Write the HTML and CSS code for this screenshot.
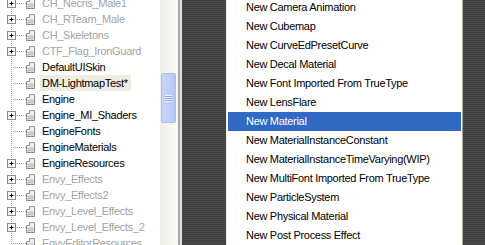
FILE: index.html
```html
<!DOCTYPE html>
<html>
<head>
<meta charset="utf-8">
<link rel="stylesheet" href="styles.css">
</head>
<body>
<div class="app">
  <div class="tree">
    <ul class="tree-list">
      <li class="row missing"><svg class="gutter" width="26" height="16"><line class="dot" x1="11.5" y1="0" x2="11.5" y2="16"/><line class="dot" x1="17" y1="8.5" x2="26" y2="8.5"/><rect class="pbox" x="7.5" y="4.5" width="8" height="8"/><path class="plus" d="M9.5 8.5h4M11.5 6.5v4"/></svg><svg class="pkg" width="9" height="11"><path d="M0.5 3.5h3v-3h5v10h-8z"/><path class="in" d="M2 6h2v3h-2zM5 6h2v3h-2z"/></svg><span class="label">CH_Necris_Male1</span></li>
      <li class="row missing"><svg class="gutter" width="26" height="16"><line class="dot" x1="11.5" y1="0" x2="11.5" y2="16"/><line class="dot" x1="17" y1="8.5" x2="26" y2="8.5"/><rect class="pbox" x="7.5" y="4.5" width="8" height="8"/><path class="plus" d="M9.5 8.5h4M11.5 6.5v4"/></svg><svg class="pkg" width="9" height="11"><path d="M0.5 3.5h3v-3h5v10h-8z"/><path class="in" d="M2 6h2v3h-2zM5 6h2v3h-2z"/></svg><span class="label">CH_RTeam_Male</span></li>
      <li class="row missing"><svg class="gutter" width="26" height="16"><line class="dot" x1="11.5" y1="0" x2="11.5" y2="16"/><line class="dot" x1="17" y1="8.5" x2="26" y2="8.5"/><rect class="pbox" x="7.5" y="4.5" width="8" height="8"/><path class="plus" d="M9.5 8.5h4M11.5 6.5v4"/></svg><svg class="pkg" width="9" height="11"><path d="M0.5 3.5h3v-3h5v10h-8z"/><path class="in" d="M2 6h2v3h-2zM5 6h2v3h-2z"/></svg><span class="label">CH_Skeletons</span></li>
      <li class="row missing"><svg class="gutter" width="26" height="16"><line class="dot" x1="11.5" y1="0" x2="11.5" y2="16"/><line class="dot" x1="17" y1="8.5" x2="26" y2="8.5"/><rect class="pbox" x="7.5" y="4.5" width="8" height="8"/><path class="plus" d="M9.5 8.5h4M11.5 6.5v4"/></svg><svg class="pkg" width="9" height="11"><path d="M0.5 3.5h3v-3h5v10h-8z"/><path class="in" d="M2 6h2v3h-2zM5 6h2v3h-2z"/></svg><span class="label">CTF_Flag_IronGuard</span></li>
      <li class="row"><svg class="gutter" width="26" height="16"><line class="dot" x1="11.5" y1="0" x2="11.5" y2="16"/><line class="dot" x1="13" y1="8.5" x2="26" y2="8.5"/></svg><svg class="pkg" width="9" height="11"><path d="M0.5 3.5h3v-3h5v10h-8z"/><path class="in" d="M2 6h2v3h-2zM5 6h2v3h-2z"/></svg><span class="label">DefaultUISkin</span></li>
      <li class="row"><svg class="gutter" width="26" height="16"><line class="dot" x1="11.5" y1="0" x2="11.5" y2="16"/><line class="dot" x1="13" y1="8.5" x2="26" y2="8.5"/></svg><svg class="pkg" width="9" height="11"><path d="M0.5 3.5h3v-3h5v10h-8z"/><path class="in" d="M2 6h2v3h-2zM5 6h2v3h-2z"/></svg><span class="label selected">DM-LightmapTest*</span></li>
      <li class="row"><svg class="gutter" width="26" height="16"><line class="dot" x1="11.5" y1="0" x2="11.5" y2="16"/><line class="dot" x1="13" y1="8.5" x2="26" y2="8.5"/></svg><svg class="pkg" width="9" height="11"><path d="M0.5 3.5h3v-3h5v10h-8z"/><path class="in" d="M2 6h2v3h-2zM5 6h2v3h-2z"/></svg><span class="label">Engine</span></li>
      <li class="row"><svg class="gutter" width="26" height="16"><line class="dot" x1="11.5" y1="0" x2="11.5" y2="16"/><line class="dot" x1="17" y1="8.5" x2="26" y2="8.5"/><rect class="pbox" x="7.5" y="4.5" width="8" height="8"/><path class="plus" d="M9.5 8.5h4M11.5 6.5v4"/></svg><svg class="pkg" width="9" height="11"><path d="M0.5 3.5h3v-3h5v10h-8z"/><path class="in" d="M2 6h2v3h-2zM5 6h2v3h-2z"/></svg><span class="label">Engine_MI_Shaders</span></li>
      <li class="row"><svg class="gutter" width="26" height="16"><line class="dot" x1="11.5" y1="0" x2="11.5" y2="16"/><line class="dot" x1="13" y1="8.5" x2="26" y2="8.5"/></svg><svg class="pkg" width="9" height="11"><path d="M0.5 3.5h3v-3h5v10h-8z"/><path class="in" d="M2 6h2v3h-2zM5 6h2v3h-2z"/></svg><span class="label">EngineFonts</span></li>
      <li class="row"><svg class="gutter" width="26" height="16"><line class="dot" x1="11.5" y1="0" x2="11.5" y2="16"/><line class="dot" x1="13" y1="8.5" x2="26" y2="8.5"/></svg><svg class="pkg" width="9" height="11"><path d="M0.5 3.5h3v-3h5v10h-8z"/><path class="in" d="M2 6h2v3h-2zM5 6h2v3h-2z"/></svg><span class="label">EngineMaterials</span></li>
      <li class="row"><svg class="gutter" width="26" height="16"><line class="dot" x1="11.5" y1="0" x2="11.5" y2="16"/><line class="dot" x1="17" y1="8.5" x2="26" y2="8.5"/><rect class="pbox" x="7.5" y="4.5" width="8" height="8"/><path class="plus" d="M9.5 8.5h4M11.5 6.5v4"/></svg><svg class="pkg" width="9" height="11"><path d="M0.5 3.5h3v-3h5v10h-8z"/><path class="in" d="M2 6h2v3h-2zM5 6h2v3h-2z"/></svg><span class="label">EngineResources</span></li>
      <li class="row missing"><svg class="gutter" width="26" height="16"><line class="dot" x1="11.5" y1="0" x2="11.5" y2="16"/><line class="dot" x1="17" y1="8.5" x2="26" y2="8.5"/><rect class="pbox" x="7.5" y="4.5" width="8" height="8"/><path class="plus" d="M9.5 8.5h4M11.5 6.5v4"/></svg><svg class="pkg" width="9" height="11"><path d="M0.5 3.5h3v-3h5v10h-8z"/><path class="in" d="M2 6h2v3h-2zM5 6h2v3h-2z"/></svg><span class="label">Envy_Effects</span></li>
      <li class="row missing"><svg class="gutter" width="26" height="16"><line class="dot" x1="11.5" y1="0" x2="11.5" y2="16"/><line class="dot" x1="17" y1="8.5" x2="26" y2="8.5"/><rect class="pbox" x="7.5" y="4.5" width="8" height="8"/><path class="plus" d="M9.5 8.5h4M11.5 6.5v4"/></svg><svg class="pkg" width="9" height="11"><path d="M0.5 3.5h3v-3h5v10h-8z"/><path class="in" d="M2 6h2v3h-2zM5 6h2v3h-2z"/></svg><span class="label">Envy_Effects2</span></li>
      <li class="row missing"><svg class="gutter" width="26" height="16"><line class="dot" x1="11.5" y1="0" x2="11.5" y2="16"/><line class="dot" x1="17" y1="8.5" x2="26" y2="8.5"/><rect class="pbox" x="7.5" y="4.5" width="8" height="8"/><path class="plus" d="M9.5 8.5h4M11.5 6.5v4"/></svg><svg class="pkg" width="9" height="11"><path d="M0.5 3.5h3v-3h5v10h-8z"/><path class="in" d="M2 6h2v3h-2zM5 6h2v3h-2z"/></svg><span class="label">Envy_Level_Effects</span></li>
      <li class="row missing"><svg class="gutter" width="26" height="16"><line class="dot" x1="11.5" y1="0" x2="11.5" y2="16"/><line class="dot" x1="17" y1="8.5" x2="26" y2="8.5"/><rect class="pbox" x="7.5" y="4.5" width="8" height="8"/><path class="plus" d="M9.5 8.5h4M11.5 6.5v4"/></svg><svg class="pkg" width="9" height="11"><path d="M0.5 3.5h3v-3h5v10h-8z"/><path class="in" d="M2 6h2v3h-2zM5 6h2v3h-2z"/></svg><span class="label">Envy_Level_Effects_2</span></li>
      <li class="row missing"><svg class="gutter" width="26" height="16"><line class="dot" x1="11.5" y1="0" x2="11.5" y2="16"/><line class="dot" x1="13" y1="8.5" x2="26" y2="8.5"/></svg><svg class="pkg" width="9" height="11"><path d="M0.5 3.5h3v-3h5v10h-8z"/><path class="in" d="M2 6h2v3h-2zM5 6h2v3h-2z"/></svg><span class="label">EnvyEditorResources</span></li>
    </ul>
  </div>
  <div class="scrollbar">
    <div class="thumb"><span class="grip"></span></div>
  </div>
  <div class="splitter"></div>
  <div class="viewport"></div>
  <ul class="menu">
    <li class="item">New Camera Animation</li>
    <li class="item">New Cubemap</li>
    <li class="item">New CurveEdPresetCurve</li>
    <li class="item">New Decal Material</li>
    <li class="item">New Font Imported From TrueType</li>
    <li class="item">New LensFlare</li>
    <li class="item active">New Material</li>
    <li class="item">New MaterialInstanceConstant</li>
    <li class="item">New MaterialInstanceTimeVarying(WIP)</li>
    <li class="item">New MultiFont Imported From TrueType</li>
    <li class="item">New ParticleSystem</li>
    <li class="item">New Physical Material</li>
    <li class="item">New Post Process Effect</li>
    <li class="item">New Sound Cue</li>
  </ul>
</div>
</body>
</html>
```
FILE: styles.css
```css
html, body {
  margin: 0;
  padding: 0;
  width: 485px;
  height: 245px;
  overflow: hidden;
  background: #ffffff;
}

.app {
  position: relative;
  display: flex;
  width: 485px;
  height: 245px;
  overflow: hidden;
  font-family: "Liberation Sans", Arial, sans-serif;
  font-size: 11px;
  letter-spacing: -0.3px;
  color: #000000;
}

.tree {
  width: 160px;
  flex: none;
  background: #ffffff;
  overflow: hidden;
}

.tree-list {
  list-style: none;
  margin: -5px 0 0 0;
  padding: 0;
}

.row {
  display: flex;
  align-items: center;
  height: 16px;
  white-space: nowrap;
}

.gutter {
  flex: none;
  display: block;
}

.dot {
  stroke: #a0a0a0;
  stroke-width: 1;
  stroke-dasharray: 1 1;
}

.pbox {
  fill: #ffffff;
  stroke: #8c8c8c;
}

.plus {
  stroke: #000000;
  stroke-width: 1;
  fill: none;
}

.pkg {
  flex: none;
  display: block;
  margin-right: 5px;
}

.pkg path {
  fill: #eeeeee;
  stroke: #8e8e8e;
  stroke-width: 1;
}

.pkg path.in {
  fill: none;
  stroke: #b8b8b8;
}

.label {
  display: block;
  height: 16px;
  line-height: 16px;
  padding: 0 3px 0 2px;
}

.missing .label {
  color: #a3a3a3;
}

.label.selected {
  background: #efede2;
}

.scrollbar {
  width: 16px;
  flex: none;
  background: linear-gradient(to right, #efeee8, #f9f9f5);
  padding-top: 73px;
  box-sizing: border-box;
}

.thumb {
  display: flex;
  align-items: center;
  justify-content: center;
  width: 15px;
  height: 50px;
  margin-left: 1px;
  box-sizing: border-box;
  background: linear-gradient(to right, #c6d5fc, #bccefa 60%, #b3c6f5);
  border: 1px solid #adbde9;
  border-radius: 2px;
}

.grip {
  display: block;
  width: 7px;
  height: 7px;
  background: repeating-linear-gradient(to bottom, #eef3ff 0, #eef3ff 1px, #8ea6e6 1px, #8ea6e6 2px);
}

.splitter {
  width: 6px;
  flex: none;
  background: linear-gradient(to right, #fbfbf9 0, #fbfbf9 2px, #a5a5a5 2px, #a5a5a5 4px, #e2e1dc 4px, #e2e1dc 6px);
}

.viewport {
  flex: 1;
  background: repeating-linear-gradient(to bottom, #3e3e3e 0, #3e3e3e 1px, #4a4a4a 1px, #4a4a4a 2px);
}

.menu {
  position: absolute;
  left: 226px;
  top: -4px;
  width: 237px;
  box-sizing: border-box;
  margin: 0;
  padding: 1px;
  list-style: none;
  background: #ffffff;
  border: 1px solid #aca899;
  border-left-color: #f1efe2;
}

.item {
  height: 19px;
  line-height: 19px;
  padding-left: 18px;
  white-space: nowrap;
  color: #000000;
}

.item.active {
  background: #316ac5;
  color: #ffffff;
}
```
